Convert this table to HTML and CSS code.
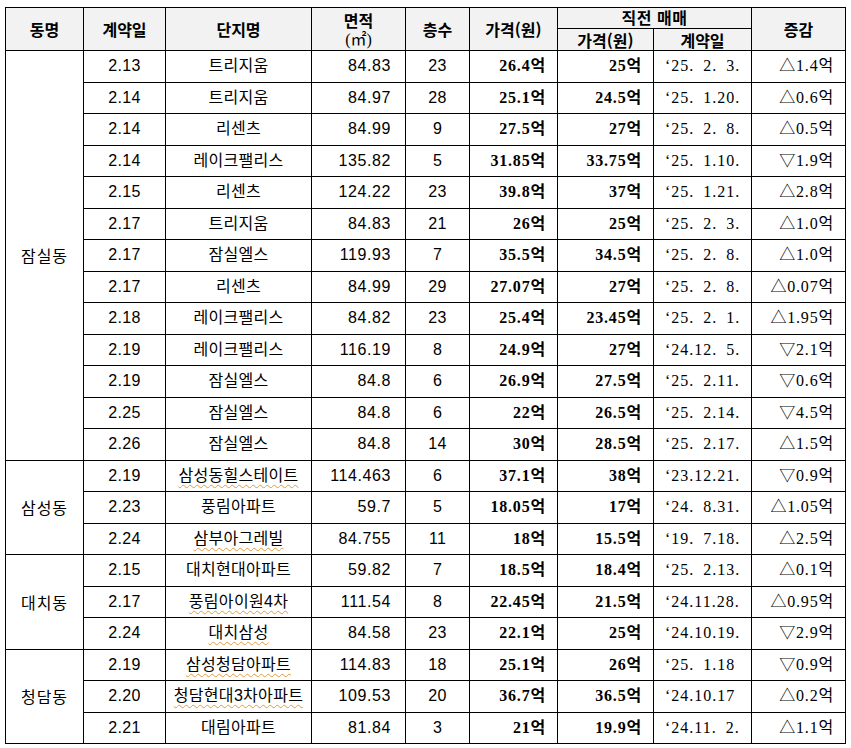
FILE: index.html
```html
<!DOCTYPE html>
<html lang="ko">
<head>
<meta charset="utf-8">
<title>아파트 매매 거래</title>
<link rel="stylesheet" href="styles.css">
</head>
<body>
<table class="deals">
  <colgroup>
    <col class="w-dong"><col class="w-date"><col class="w-name"><col class="w-area"><col class="w-floor"><col class="w-price"><col class="w-prev"><col class="w-pdate"><col class="w-diff">
  </colgroup>
  <thead>
    <tr class="h1">
      <th rowspan="2">동명</th>
      <th rowspan="2">계약일</th>
      <th rowspan="2">단지명</th>
      <th rowspan="2" class="two">면적<br><span class="unit">(㎡)</span></th>
      <th rowspan="2">층수</th>
      <th rowspan="2">가격(원)</th>
      <th colspan="2" class="group">직전 매매</th>
      <th rowspan="2">증감</th>
    </tr>
    <tr class="h2">
      <th class="sub">가격(원)</th>
      <th class="sub">계약일</th>
    </tr>
  </thead>
  <tbody>
    <tr><td rowspan="13" class="dong">잠실동</td><td class="c">2.13</td><td class="c">트리지움</td><td class="r">84.83</td><td class="c">23</td><td class="p">26.4억</td><td class="p">25억</td><td class="d">‘25. 2. 3.</td><td class="g">△1.4억</td></tr>
    <tr><td class="c">2.14</td><td class="c">트리지움</td><td class="r">84.97</td><td class="c">28</td><td class="p">25.1억</td><td class="p">24.5억</td><td class="d">‘25. 1.20.</td><td class="g">△0.6억</td></tr>
    <tr><td class="c">2.14</td><td class="c">리센츠</td><td class="r">84.99</td><td class="c">9</td><td class="p">27.5억</td><td class="p">27억</td><td class="d">‘25. 2. 8.</td><td class="g">△0.5억</td></tr>
    <tr><td class="c">2.14</td><td class="c">레이크팰리스</td><td class="r">135.82</td><td class="c">5</td><td class="p">31.85억</td><td class="p">33.75억</td><td class="d">‘25. 1.10.</td><td class="g">▽1.9억</td></tr>
    <tr><td class="c">2.15</td><td class="c">리센츠</td><td class="r">124.22</td><td class="c">23</td><td class="p">39.8억</td><td class="p">37억</td><td class="d">‘25. 1.21.</td><td class="g">△2.8억</td></tr>
    <tr><td class="c">2.17</td><td class="c">트리지움</td><td class="r">84.83</td><td class="c">21</td><td class="p">26억</td><td class="p">25억</td><td class="d">‘25. 2. 3.</td><td class="g">△1.0억</td></tr>
    <tr><td class="c">2.17</td><td class="c">잠실엘스</td><td class="r">119.93</td><td class="c">7</td><td class="p">35.5억</td><td class="p">34.5억</td><td class="d">‘25. 2. 8.</td><td class="g">△1.0억</td></tr>
    <tr><td class="c">2.17</td><td class="c">리센츠</td><td class="r">84.99</td><td class="c">29</td><td class="p">27.07억</td><td class="p">27억</td><td class="d">‘25. 2. 8.</td><td class="g">△0.07억</td></tr>
    <tr><td class="c">2.18</td><td class="c">레이크팰리스</td><td class="r">84.82</td><td class="c">23</td><td class="p">25.4억</td><td class="p">23.45억</td><td class="d">‘25. 2. 1.</td><td class="g">△1.95억</td></tr>
    <tr><td class="c">2.19</td><td class="c">레이크팰리스</td><td class="r">116.19</td><td class="c">8</td><td class="p">24.9억</td><td class="p">27억</td><td class="d">‘24.12. 5.</td><td class="g">▽2.1억</td></tr>
    <tr><td class="c">2.19</td><td class="c">잠실엘스</td><td class="r">84.8</td><td class="c">6</td><td class="p">26.9억</td><td class="p">27.5억</td><td class="d">‘25. 2.11.</td><td class="g">▽0.6억</td></tr>
    <tr><td class="c">2.25</td><td class="c">잠실엘스</td><td class="r">84.8</td><td class="c">6</td><td class="p">22억</td><td class="p">26.5억</td><td class="d">‘25. 2.14.</td><td class="g">▽4.5억</td></tr>
    <tr><td class="c">2.26</td><td class="c">잠실엘스</td><td class="r">84.8</td><td class="c">14</td><td class="p">30억</td><td class="p">28.5억</td><td class="d">‘25. 2.17.</td><td class="g">△1.5억</td></tr>

    <tr><td rowspan="3" class="dong">삼성동</td><td class="c">2.19</td><td class="c"><span class="spell">삼성동힐스테이트</span></td><td class="r">114.463</td><td class="c">6</td><td class="p">37.1억</td><td class="p">38억</td><td class="d">‘23.12.21.</td><td class="g">▽0.9억</td></tr>
    <tr><td class="c">2.23</td><td class="c">풍림아파트</td><td class="r">59.7</td><td class="c">5</td><td class="p">18.05억</td><td class="p">17억</td><td class="d">‘24. 8.31.</td><td class="g">△1.05억</td></tr>
    <tr><td class="c">2.24</td><td class="c"><span class="spell">삼부아그레빌</span></td><td class="r">84.755</td><td class="c">11</td><td class="p">18억</td><td class="p">15.5억</td><td class="d">‘19. 7.18.</td><td class="g">△2.5억</td></tr>

    <tr><td rowspan="3" class="dong">대치동</td><td class="c">2.15</td><td class="c">대치현대아파트</td><td class="r">59.82</td><td class="c">7</td><td class="p">18.5억</td><td class="p">18.4억</td><td class="d">‘25. 2.13.</td><td class="g">△0.1억</td></tr>
    <tr><td class="c">2.17</td><td class="c"><span class="spell">풍림아이원4차</span></td><td class="r">111.54</td><td class="c">8</td><td class="p">22.45억</td><td class="p">21.5억</td><td class="d">‘24.11.28.</td><td class="g">△0.95억</td></tr>
    <tr><td class="c">2.24</td><td class="c"><span class="spell">대치삼성</span></td><td class="r">84.58</td><td class="c">23</td><td class="p">22.1억</td><td class="p">25억</td><td class="d">‘24.10.19.</td><td class="g">▽2.9억</td></tr>

    <tr><td rowspan="3" class="dong">청담동</td><td class="c">2.19</td><td class="c"><span class="spell">삼성청담아파트</span></td><td class="r">114.83</td><td class="c">18</td><td class="p">25.1억</td><td class="p">26억</td><td class="d">‘25. 1.18</td><td class="g">▽0.9억</td></tr>
    <tr><td class="c">2.20</td><td class="c"><span class="spell">청담현대3차아파트</span></td><td class="r">109.53</td><td class="c">20</td><td class="p">36.7억</td><td class="p">36.5억</td><td class="d">‘24.10.17</td><td class="g">△0.2억</td></tr>
    <tr><td class="c">2.21</td><td class="c">대림아파트</td><td class="r">81.84</td><td class="c">3</td><td class="p">21억</td><td class="p">19.9억</td><td class="d">‘24.11. 2.</td><td class="g">△1.1억</td></tr>
  </tbody>
</table>
</body>
</html>
```

FILE: styles.css
```css
html, body {
  margin: 0;
  padding: 0;
  background: #ffffff;
}

body {
  padding: 7px 0 0 5px;
  color: #000;
  font-family: "Liberation Sans", "Noto Sans CJK KR", sans-serif;
  font-size: 16px;
}

.deals {
  border-collapse: collapse;
  table-layout: fixed;
  width: 840px;
}

.w-dong { width: 78px; }
.w-date { width: 82px; }
.w-name { width: 146px; }
.w-area { width: 94px; }
.w-floor { width: 64px; }
.w-price { width: 88px; }
.w-prev { width: 96px; }
.w-pdate { width: 98px; }
.w-diff { width: 94px; }

.deals th,
.deals td {
  border: 1px solid #000;
  padding: 0;
  white-space: nowrap;
}

.deals td {
  overflow: hidden;
}

.deals th {
  background: #f2f2f2;
  font-weight: 700;
  font-family: "Noto Sans CJK KR", sans-serif;
  font-size: 16px;
  line-height: 18px;
  text-align: center;
  vertical-align: middle;
}

.deals .h1 { height: 21px; }
.deals .h2 { height: 22px; }

.deals th.group {
  line-height: 16px;
  letter-spacing: 0.5px;
  vertical-align: top;
  padding-top: 1px;
}

.deals th.sub {
  line-height: 18px;
}

.deals th.two { line-height: 18px; padding-top: 1px; }
.unit {
  font-family: "Liberation Serif", "Noto Sans CJK KR", serif;
  font-weight: 400;
  font-size: 16px;
}

.deals tbody tr { height: 31.5px; }

.deals td {
  line-height: 20px;
  vertical-align: middle;
}

.dong {
  text-align: center;
  font-family: "Noto Sans CJK KR", sans-serif;
  letter-spacing: 1px;
}

.c {
  text-align: center;
  letter-spacing: 0.3px;
}

.r {
  text-align: right;
  padding-right: 14px !important;
  letter-spacing: 0.6px;
}

.p {
  text-align: right;
  padding-right: 11px !important;
  font-family: "Liberation Serif", "Noto Sans CJK KR", serif;
  font-weight: 700;
  letter-spacing: 0.8px;
}

.d {
  text-align: left;
  padding-left: 11px !important;
  font-family: "Liberation Serif", "Noto Sans CJK KR", serif;
  white-space: pre !important;
  letter-spacing: 1px;
  word-spacing: 0.25em;
}

.g {
  text-align: right;
  padding-right: 11px !important;
  font-family: "Liberation Serif", "Noto Sans CJK KR", serif;
  letter-spacing: 0.8px;
}

.spell {
  text-decoration: underline wavy #e29a3c;
  text-decoration-thickness: 1px;
  text-underline-offset: 3px;
}
```
